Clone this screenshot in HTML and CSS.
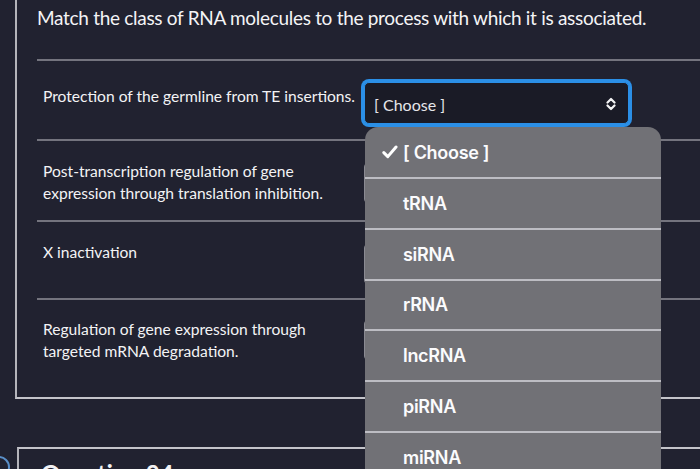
FILE: index.html
```html
<!DOCTYPE html>
<html lang="en">
<head>
<meta charset="utf-8">
<title>Matching question</title>
<link rel="stylesheet" href="styles.css">
</head>
<body>
<div class="page">
  <section class="quiz">
    <h2 class="prompt">Match the class of RNA molecules to the process with which it is associated.</h2>
    <div class="rows">
      <div class="row row-first">
        <div class="label">Protection of the germline from TE insertions.</div>
        <div class="select is-focused">
          <span class="select-text">[ Choose ]</span>
          <svg class="updown" width="10" height="14" viewBox="0 0 10 14"><path d="M1.5 5.5 L5 2 L8.5 5.5 M1.5 8.5 L5 12 L8.5 8.5" fill="none" stroke="#f4f4f4" stroke-width="2.2" stroke-linecap="round" stroke-linejoin="round"/></svg>
        </div>
      </div>
      <div class="row row-tall">
        <div class="label">Post-transcription regulation of gene expression through translation inhibition.</div>
        <div class="select"></div>
      </div>
      <div class="row">
        <div class="label">X inactivation</div>
        <div class="select"></div>
      </div>
      <div class="row row-last">
        <div class="label">Regulation of gene expression through targeted mRNA degradation.</div>
        <div class="select"></div>
      </div>
    </div>
  </section>
  <section class="next">
    <h3 class="next-title">Question 24</h3>
  </section>
  <span class="corner-icon"></span>
  <ul class="menu">
    <li class="item"><span class="check"><svg width="16" height="14" viewBox="0 0 16 14"><path d="M1.8 7.6 L5.8 11.6 L14 2" fill="none" stroke="#fff" stroke-width="3" stroke-linecap="round" stroke-linejoin="round"/></svg></span>[ Choose ]</li>
    <li class="item"><span class="check"></span>tRNA</li>
    <li class="item"><span class="check"></span>siRNA</li>
    <li class="item"><span class="check"></span>rRNA</li>
    <li class="item"><span class="check"></span>lncRNA</li>
    <li class="item"><span class="check"></span>piRNA</li>
    <li class="item"><span class="check"></span>miRNA</li>
  </ul>
</div>
</body>
</html>
```
FILE: styles.css
```css
html, body {
  margin: 0;
  padding: 0;
  background: #212230;
  overflow: hidden;
}
body {
  font-family: Lato, "Open Sans", sans-serif;
  color: #f1f1f3;
}
.page {
  position: relative;
  width: 700px;
  height: 469px;
  overflow: hidden;
}
.quiz {
  margin-left: 15px;
  border-left: 2px solid #b4b4ba;
  border-bottom: 2px solid #c4c4ca;
  padding-left: 20px;
}
.prompt {
  margin: 0;
  height: 59px;
  padding-top: 4px;
  box-sizing: border-box;
  font-size: 19px;
  letter-spacing: -0.3px;
  font-weight: 400;
  line-height: 28px;
  color: #f4f4f6;
}
.row {
  display: grid;
  grid-template-columns: 321px 265px;
  align-items: start;
  border-top: 2px solid #74747e;
  padding: 21px 0 13px 6px;
}
.row-first {
  padding-top: 21px;
  padding-bottom: 15px;
}
.row-tall {
  padding-bottom: 16px;
}
.row-last {
  padding-top: 19px;
  padding-bottom: 35px;
}
.label {
  font-size: 15.6px;
  line-height: 22px;
  color: #f3f3f5;
  padding-right: 40px;
  margin-top: -2px;
}
.row-first .label {
  padding-right: 0;
  margin-top: 3px;
  white-space: nowrap;
}
.row-last .label {
  margin-top: -1px;
}
.select {
  box-sizing: border-box;
  height: 42px;
  border: 1px solid #8a8a92;
  border-radius: 5px;
  background: #1d1e2a;
}
.select.is-focused {
  display: flex;
  align-items: center;
  justify-content: space-between;
  padding: 2px 12px 0 9px;
  border: 1px solid #2b8fe6;
  box-shadow: 0 0 0 3px #2b8fe6;
  background: #1a1b26;
}
.select-text {
  font-size: 16px;
  color: #e6e6ea;
}
.updown {
  display: block;
}
.next {
  margin: 48px 0 0 17px;
  border-left: 2px solid #b4b4ba;
  border-top: 2px solid #c4c4ca;
  padding: 10px 0 0 22px;
}
.next-title {
  margin: 0;
  font-size: 24px;
  font-weight: 700;
  line-height: 30px;
  color: #f1f1f3;
}
.corner-icon {
  position: absolute;
  left: -12px;
  top: 456px;
  width: 18px;
  height: 18px;
  border: 2px solid #5a8fc8;
  border-radius: 50%;
}
.menu {
  position: absolute;
  left: 365px;
  top: 127px;
  width: 296px;
  margin: 0;
  padding: 0;
  list-style: none;
  background: #717176;
  border-radius: 13px 13px 0 0;
  font-family: Inter, Roboto, sans-serif;
  font-weight: 600;
  font-size: 18px;
  color: #fbfbfd;
}
.item {
  display: flex;
  align-items: center;
  height: 50.8px;
  padding-left: 17px;
  box-sizing: border-box;
  letter-spacing: -0.3px;
}
.item:first-child {
  height: 50px;
}
.item + .item {
  border-top: 2px solid #bdbdc3;
}
.check {
  display: inline-flex;
  width: 21px;
  flex: none;
}
.check svg {
  display: block;
}
```
